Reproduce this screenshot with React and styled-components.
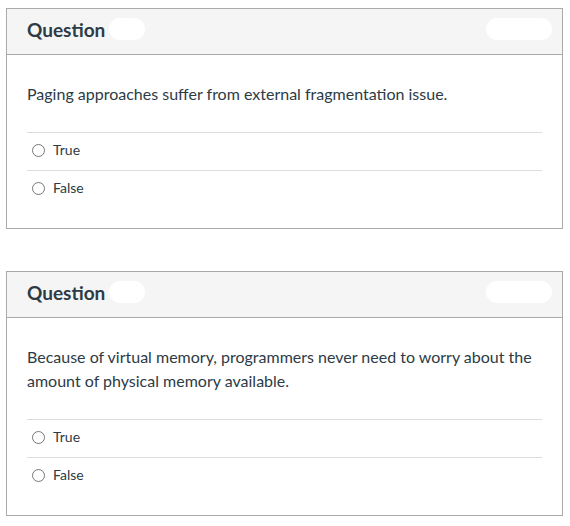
import React from 'react';
import styled, { createGlobalStyle } from 'styled-components';

const GlobalStyle = createGlobalStyle`
    body {
        margin: 0;
        background: #fff;
        font-family: Lato, "Open Sans", sans-serif;
        color: #2d3b45;
    }
`;

const questions = [
    { id: 1, text: 'Paging approaches suffer from external fragmentation issue.' },
    {
        id: 2,
        text: 'Because of virtual memory, programmers never need to worry about the amount of physical memory available.',
    },
];

const App = () => {
    return (
        <>
            <GlobalStyle />
            <PageWrap>
                {questions.map((q) => (
                    <Card key={q.id}>
                        <Header>
                            <Title>Question</Title>
                            <Blob $w={36} $h={22} />
                            <Spacer />
                            <Blob $w={66} $h={22} />
                        </Header>
                        <Body>
                            <QuestionText>{q.text}</QuestionText>
                            <Answers>
                                {['True', 'False'].map((a) => (
                                    <AnswerRow key={a}>
                                        <Radio />
                                        <AnswerLabel>{a}</AnswerLabel>
                                    </AnswerRow>
                                ))}
                            </Answers>
                        </Body>
                    </Card>
                ))}
            </PageWrap>
        </>
    );
};

export default App;

const PageWrap = styled.div`
    display: flex;
    flex-direction: column;
    gap: 42px;
    padding: 8px 7px 0 6px;
`;

const Card = styled.div`
    border: 1px solid #aaaaaa;
    background: #fff;
`;

const Header = styled.div`
    display: flex;
    align-items: center;
    height: 46px;
    padding: 0 10px 5px 20px;
    box-sizing: border-box;
    background: #f5f5f5;
    border-bottom: 1px solid #aaaaaa;
`;

const Title = styled.div`
    font-size: 19px;
    font-weight: 700;
    color: #2d3b45;
`;

const Blob = styled.div`
    width: ${(p) => p.$w}px;
    height: ${(p) => p.$h}px;
    margin-left: 4px;
    background: #fff;
    border-radius: 12px;
`;

const Spacer = styled.div`
    flex: 1;
`;

const Body = styled.div`
    padding: 27px 20px 20px;
`;

const QuestionText = styled.div`
    font-size: 16px;
    line-height: 24px;
    color: #2d3b45;
    padding-bottom: 26px;
`;

const Answers = styled.div`
    display: flex;
    flex-direction: column;
`;

const AnswerRow = styled.div`
    display: flex;
    align-items: center;
    height: 38px;
    padding: 0 0 4px 5px;
    box-sizing: border-box;
    border-top: 1px solid #dddddd;
`;

const Radio = styled.span`
    width: 11px;
    height: 11px;
    margin-top: 2px;
    border: 1px solid #777;
    border-radius: 50%;
    margin-right: 8px;
    background: #fff;
`;

const AnswerLabel = styled.span`
    font-size: 14px;
    color: #2d3b45;
`;
